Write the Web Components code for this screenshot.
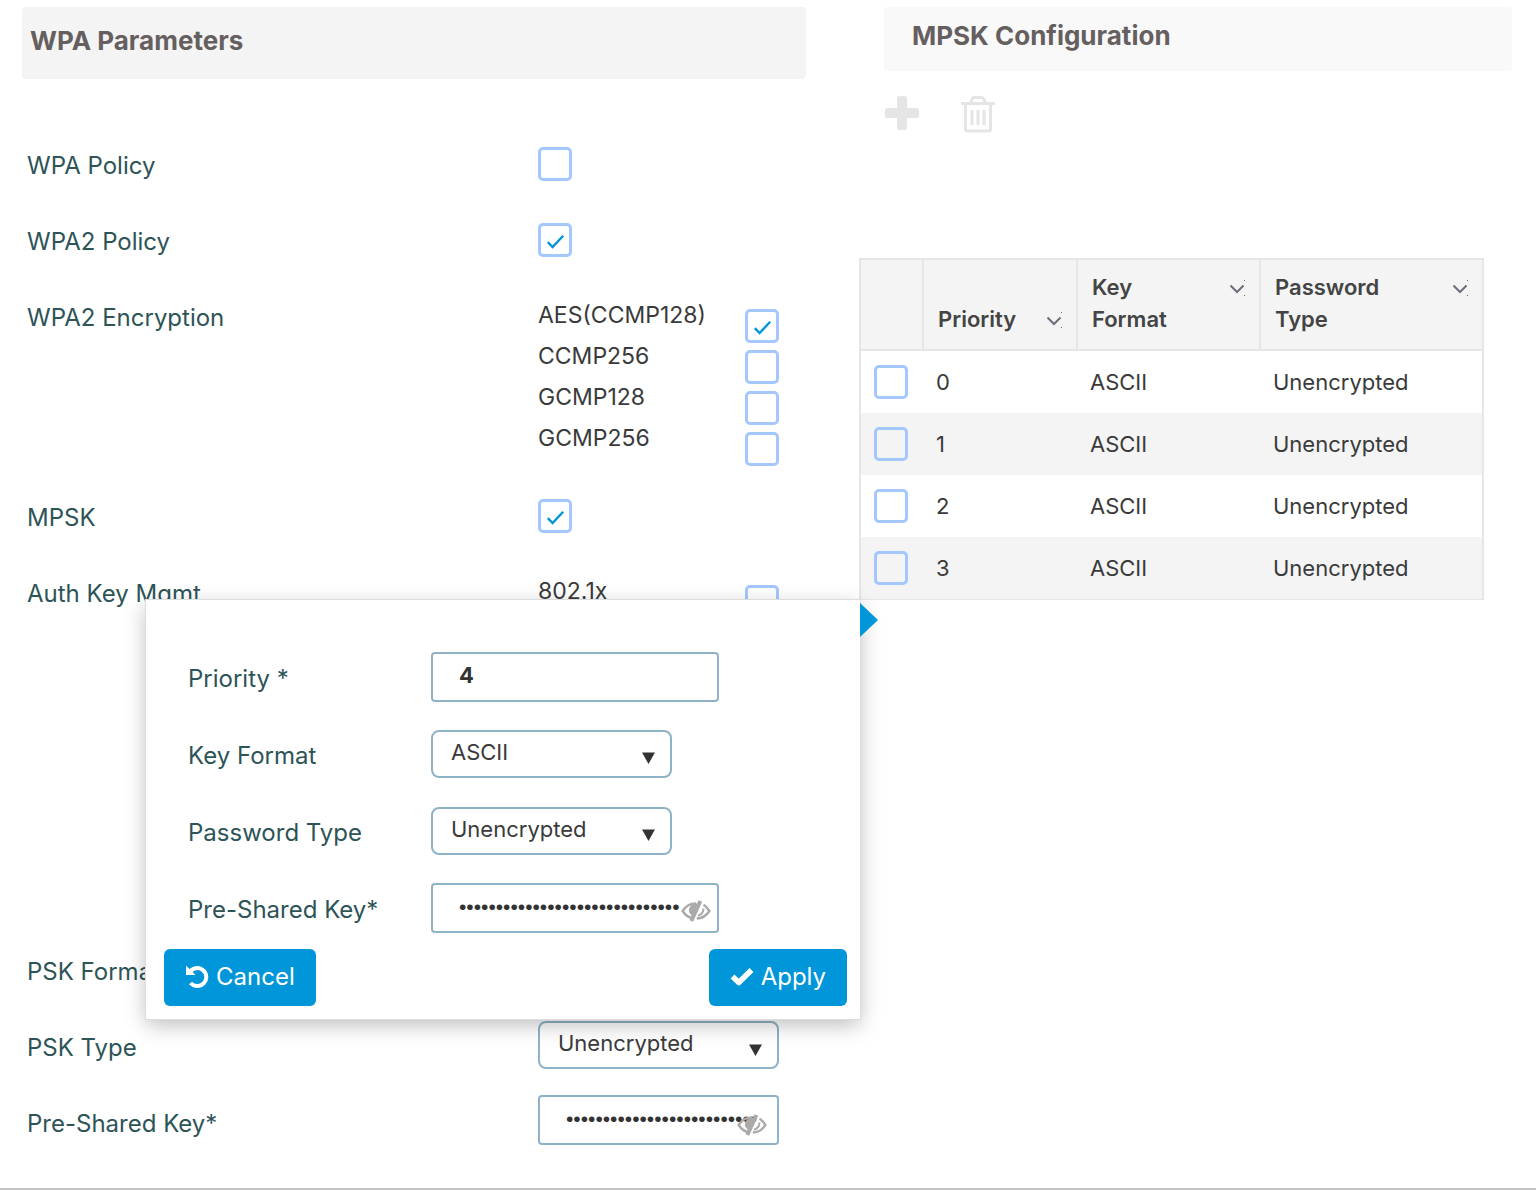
<!DOCTYPE html>
<html lang="en">
<head>
<meta charset="utf-8">
<title>WLAN Security</title>
<style>
  body { margin: 0; background: #fff; color: #3a3a3a; font-family: Inter, "Liberation Sans", Arial, sans-serif; font-size: 22px; }
</style>
</head>
<body>
<security-page></security-page>

<script>
const define = (name, html, setup) => {
  const template = document.createElement('template');
  template.innerHTML = html;
  customElements.define(name, class extends HTMLElement {
    constructor() {
      super();
      this.attachShadow({ mode: 'open' }).append(template.content.cloneNode(true));
    }
    connectedCallback() { if (setup) setup(this, this.shadowRoot); }
  });
};

/* Square tick box */
define('check-box', `
<style>
  :host { display: block; width: 34px; height: 34px; }
  input { appearance: none; display: block; box-sizing: border-box; width: 34px; height: 34px; margin: 0;
    border: 3px solid #a5c7ff; border-radius: 5px; background: transparent; }
  label { display: grid; }
  label > * { grid-area: 1 / 1; }
  svg { display: none; width: 34px; height: 34px; pointer-events: none; }
  input:checked + svg { display: block; }
</style>
<label><input type="checkbox"><svg viewBox="0 0 34 34" fill="none" stroke="#0096d9" stroke-width="2.4"><path d="M9.8 19.2 14.6 24 25.2 12.8"/></svg></label>`,
(host, root) => {
  const input = root.querySelector('input');
  input.checked = host.hasAttribute('checked');
  input.setAttribute('aria-label', host.getAttribute('name') || '');
});

/* Drop-down */
define('select-box', `
<style>
  :host { display: grid; width: 241px; height: 48px; }
  select, svg { grid-area: 1 / 1; }
  select { appearance: none; box-sizing: border-box; width: 100%; height: 100%; margin: 0; padding: 0 48px 4px 18px;
    border: 2px solid #8fb3c6; border-radius: 8px; background: #fff; font: inherit; font-size: 22px; color: #3a3a3a; }
  svg { justify-self: end; align-self: center; width: 13px; height: 12px; margin: 9px 17px 0 0; pointer-events: none; }
</style>
<select><option></option></select>
<svg viewBox="0 0 13 12" fill="#333"><path d="M0 0.5H13L6.5 12Z"/></svg>`,
(host, root) => {
  root.querySelector('option').textContent = host.getAttribute('value');
  root.querySelector('select').setAttribute('aria-label', host.getAttribute('name'));
});

/* Single-line field, with a reveal icon when it holds a secret */
define('text-box', `
<style>
  :host { display: grid; width: 288px; height: 50px; }
  :host([narrow]) { width: 241px; }
  input, button { grid-area: 1 / 1; }
  input { box-sizing: border-box; width: 100%; height: 100%; margin: 0; padding: 0 9px 4px 26px; border: 2px solid #8fb3c6;
    border-radius: 4px; background: #fff; font: inherit; font-size: 22px; font-weight: 700; color: #333; }
  input[type=password] { font: 21px "Liberation Sans", Arial, sans-serif; padding-bottom: 2px; }
  button { display: none; justify-self: end; align-self: center; margin: 6px 8px 0 0; padding: 0; border: 0; background: none; }
  :host([secret]) button { display: block; }
  :host([narrow]) button { margin: 10px 12px 0 0; }
  svg { display: block; width: 30px; height: 24px; }
</style>
<input type="text">
<button type="button" aria-label="Show key"><svg viewBox="0 0 30 24" fill="none" stroke="#aaa" stroke-width="2.4">
  <path d="M11.500 19.200C7.500 18.400 4 15.600 1.600 12 4.800 7 9.500 4.400 15 4.400"/>
  <path d="M22.500 5.800C24.800 7.200 26.800 9.400 28.400 12 25.600 16.400 21 19.300 15.800 19.500"/>
  <path d="M15 4.500C9 5 7 10 8.200 13.500L11.500 17.500 18.500 4.500Z" fill="#aaa" stroke="none"/>
  <path d="M19.400 2 10.300 22" stroke-width="4"/>
  <path d="M22.500 9.500C22.500 13 20.500 15.500 17 16.800" stroke-width="2"/>
</svg></button>`,
(host, root) => {
  const input = root.querySelector('input');
  if (host.hasAttribute('secret')) input.type = 'password';
  input.value = host.getAttribute('value');
  input.setAttribute('aria-label', host.getAttribute('name'));
});

/* Solid action button */
define('action-button', `
<style>
  :host { display: block; }
  button { display: flex; align-items: center; gap: 7px; height: 57px; margin: 0; padding: 0 21px 3px; border: 0; border-radius: 6px;
    background: #0096d9; color: #fff; font: inherit; font-size: 24px; white-space: nowrap; }
  ::slotted(svg) { display: block; width: 24px; height: 24px; }
</style>
<button type="button"><slot name="icon"></slot><slot></slot></button>`);

/* Label and control on one line */
define('field-row', `
<style>
  :host { display: grid; grid-template-columns: 511fr 268fr; min-height: 76px; padding-left: 5px; color: #2d5457; font-size: 24px; }
  .label { padding-top: 2px; line-height: 74px; white-space: nowrap; }
  .box { padding-top: 20px; }
  :host([control=select]) .box { padding-top: 12px; }
  :host([control=text]) .box { padding-top: 10px; }
  :host([control=list]) .box { padding-top: 15px; }
</style>
<div class="label"><slot name="label"></slot></div>
<div class="box"><slot></slot></div>`);

/* Named tick box */
define('option-line', `
<style>
  :host { display: grid; grid-template-columns: 207px 34px; align-items: start; height: 41px; line-height: 42px; color: #3a3a3a; font-size: 23px; }
  check-box { margin-top: 15px; }
</style>
<span><slot></slot></span><check-box></check-box>`,
(host, root) => {
  const box = root.querySelector('check-box').shadowRoot.querySelector('input');
  box.checked = host.hasAttribute('checked');
  box.setAttribute('aria-label', host.textContent);
});

define('wpa-panel', `
<style>
  :host { display: block; }
  h2 { margin: 0 0 48px; padding: 0 8px 4px; line-height: 68px; border-radius: 4px; background: #f4f4f4; color: #665f5f; font-size: 26px; font-weight: 700; }
  .encryption { min-height: 200px; }
  .auth { min-height: 378px; }
</style>
<h2>WPA Parameters</h2>
<field-row><span slot="label">WPA Policy</span><check-box name="WPA Policy"></check-box></field-row>
<field-row><span slot="label">WPA2 Policy</span><check-box name="WPA2 Policy" checked></check-box></field-row>
<field-row class="encryption" control="list"><span slot="label">WPA2 Encryption</span>
  <option-line checked>AES(CCMP128)</option-line>
  <option-line>CCMP256</option-line>
  <option-line>GCMP128</option-line>
  <option-line>GCMP256</option-line>
</field-row>
<field-row><span slot="label">MPSK</span><check-box name="MPSK" checked></check-box></field-row>
<field-row class="auth" control="list"><span slot="label">Auth Key Mgmt</span>
  <option-line>802.1x</option-line>
</field-row>
<field-row><span slot="label">PSK Format</span></field-row>
<field-row control="select"><span slot="label">PSK Type</span><select-box name="PSK Type" value="Unencrypted"></select-box></field-row>
<field-row control="text"><span slot="label">Pre-Shared Key*</span><text-box narrow secret name="Pre-Shared Key" value="abcdefghijklmnopqrstuvwxyz"></text-box></field-row>`);

/* Column heading with its menu chevron */
define('column-head', `
<style>
  :host { display: flex; justify-content: space-between; align-items: flex-start; }
  svg { width: 16px; height: 32px; }
</style>
<span><slot></slot></span>
<svg viewBox="0 0 16 32" fill="none" stroke="#6b6f7b" stroke-width="2"><path d="M1.500 14.500 8 21 14.500 14.500"/><path d="M15.500 9v1M15.500 24v1" stroke-width="1"/></svg>`);

define('key-table', `
<style>
  :host { display: block; }
  table { width: 100%; table-layout: fixed; border-collapse: separate; border-spacing: 0; border: 2px solid #e6e6e6; border-bottom-width: 1px; }
  col.pick { width: 63px; } col.priority { width: 154px; } col.format { width: 183px; }
  th { height: 91px; box-sizing: border-box; padding: 0 14px 14px; border-right: 2px solid #e6e6e6; border-bottom: 2px solid #e6e6e6;
    background: #f4f4f4; color: #444; font-size: 22px; font-weight: 600; line-height: 32px; text-align: left; vertical-align: bottom; }
  th:last-child { border-right: 0; }
  td { height: 62px; box-sizing: border-box; padding: 0 12px 1px; }
  td:first-child { padding: 0 13px; }
  tr:nth-child(even) td { background: #f4f4f4; }
</style>
<table>
  <colgroup><col class="pick"><col class="priority"><col class="format"><col></colgroup>
  <thead><tr><th></th>
    <th><column-head>Priority</column-head></th>
    <th><column-head>Key<br>Format</column-head></th>
    <th><column-head>Password<br>Type</column-head></th></tr></thead>
  <tbody></tbody>
</table>`,
(host, root) => {
  root.querySelector('tbody').innerHTML = [0, 1, 2, 3].map(n =>
    `<tr><td><check-box name="Select key ${n}"></check-box></td><td>${n}</td><td>ASCII</td><td>Unencrypted</td></tr>`).join('');
});

/* Pop-up form for a new key */
define('key-dialog', `
<style>
  :host { display: block; box-sizing: border-box; width: 714px; padding: 38px 13px 13px 18px; background: #fff;
    box-shadow: 0 0 0 1px #ddd, 0 6px 20px rgba(0,0,0,.26); }
  .row { display: grid; grid-template-columns: 243px auto; align-items: center; justify-content: start; height: 77px; padding-left: 24px; }
  .row > span { padding-top: 4px; color: #2d5457; font-size: 24px; white-space: nowrap; }
  .actions { display: flex; justify-content: space-between; padding-top: 3px; }
  .arrow { position: absolute; left: 100%; top: 3px; width: 18px; height: 34px; }
</style>
<svg class="arrow" viewBox="0 0 18 34" fill="#0096d9"><path d="M0 0 18 17 0 34Z"/></svg>
<div class="row"><span>Priority *</span><text-box name="Priority" value="4"></text-box></div>
<div class="row"><span>Key Format</span><select-box name="Key Format" value="ASCII"></select-box></div>
<div class="row"><span>Password Type</span><select-box name="Password Type" value="Unencrypted"></select-box></div>
<div class="row"><span>Pre-Shared Key*</span><text-box secret name="Pre-Shared Key" value="abcdefghijklmnopqrstuvwxyz0123"></text-box></div>
<div class="actions">
  <action-button><svg slot="icon" viewBox="0 0 24 24"><path d="M4.500 8.500A9 9 0 1 1 5.500 19" fill="none" stroke="#fff" stroke-width="4"/><path d="M1 1.500V11H10.500Z" fill="#fff"/></svg>Cancel</action-button>
  <action-button><svg slot="icon" viewBox="0 0 24 24" fill="none" stroke="#fff" stroke-width="5.500" stroke-linejoin="round"><path d="M2.500 12.500 8.800 18.500 21.500 6"/></svg>Apply</action-button>
</div>`);

define('mpsk-panel', `
<style>
  :host { display: block; }
  h2 { margin: 0 0 0 25px; padding: 0 28px 6px; line-height: 58px; border-radius: 2px; background: #f9f9f9; color: #665f5f; font-size: 26px; font-weight: 700; }
  .tools { display: flex; gap: 42px; margin: 25px 0 125px 26px; }
  .tools button { margin: 0; padding: 0; border: 0; background: none; }
  .tools svg { display: block; width: 34px; height: 37px; }
  .keys { position: relative; margin-right: 28px; }
  key-dialog { position: absolute; right: calc(100% - 1px); top: 100%; z-index: 1; }
</style>
<h2>MPSK Configuration</h2>
<div class="tools">
  <button type="button" aria-label="Add"><svg viewBox="0 0 34 37" fill="#e5e5e5"><rect x="0" y="12" width="34" height="10" rx="2.500"/><rect x="12" y="0" width="10" height="34" rx="2.500"/></svg></button>
  <button type="button" aria-label="Delete"><svg viewBox="0 0 34 37" fill="none" stroke="#e5e5e5" stroke-width="3"><path d="M0 7.500H34M4.500 8V33Q4.500 35 6.500 35H27.500Q29.500 35 29.500 33V8M9.500 7 11.500 2.500Q12 1.500 13 1.500H21Q22 1.500 22.500 2.500L24.500 7"/><path d="M11 14V29M17 14V29M23 14V29"/></svg></button>
</div>
<div class="keys"><key-table></key-table><key-dialog></key-dialog></div>`);

define('security-page', `
<style>
  :host { display: grid; grid-template-columns: 784fr 653fr; column-gap: 53px; align-items: start; padding: 7px 24px 27px 22px; border-bottom: 2px solid #c4c4c4; }
</style>
<wpa-panel></wpa-panel>
<mpsk-panel></mpsk-panel>`);
</script>
</body>
</html>
